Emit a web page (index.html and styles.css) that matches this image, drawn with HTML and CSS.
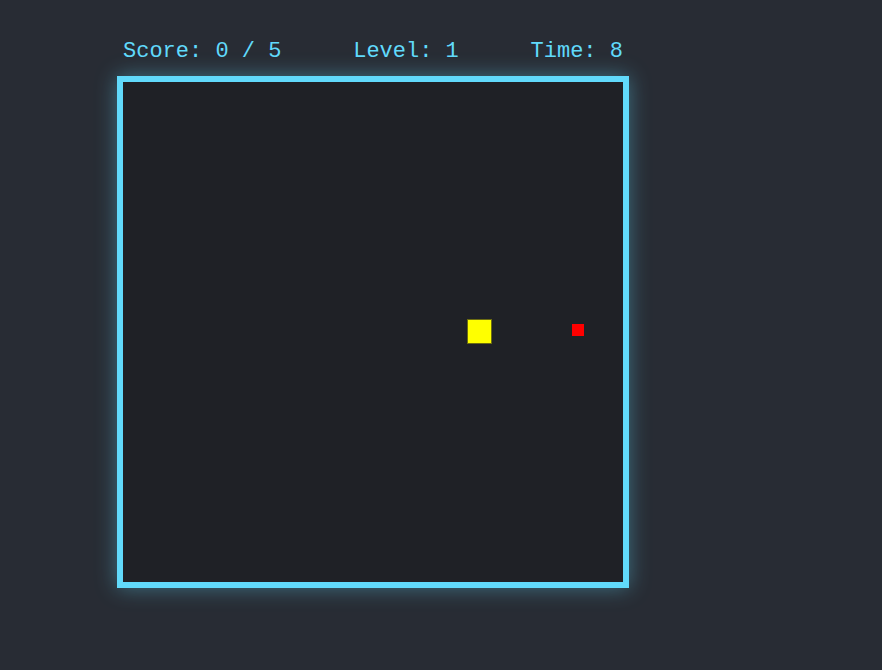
FILE: index.html
```html
<!DOCTYPE html>
<html>
<head>
<meta charset="utf-8">
<link rel="stylesheet" href="styles.css">
</head>
<body>
<div class="app">
  <div class="hud">
    <span class="stat">Score: 0 / 5</span>
    <span class="stat">Level: 1</span>
    <span class="stat">Time: 8</span>
  </div>
  <div class="board">
    <div class="player"></div>
    <div class="food"></div>
  </div>
</div>
</body>
</html>
```
FILE: styles.css
```css
html, body {
  margin: 0;
  padding: 0;
  background: #282c34;
  height: 100%;
}
.app {
  width: 512px;
  margin-left: 117px;
  padding-top: 39px;
  font-family: "Nimbus Mono PS", "Nimbus Mono L", Courier, "FreeMono", "Courier New", monospace;
}
.hud {
  display: flex;
  justify-content: space-between;
  padding: 0 6px;
  height: 25px;
  line-height: 25px;
  font-size: 22px;
  color: #61dafb;
  margin-bottom: 12px;
}
.board {
  position: relative;
  width: 500px;
  height: 500px;
  border: 6px solid #61dafb;
  background: #1f2126;
  box-shadow: 0 0 20px rgba(97, 218, 251, 0.4);
}
.player {
  position: absolute;
  left: 344px;
  top: 237px;
  width: 23px;
  height: 23px;
  background: #ffff00;
  border: 1px solid #6b6b10;
}
.food {
  position: absolute;
  left: 449px;
  top: 242px;
  width: 12px;
  height: 12px;
  background: #ff0000;
}
```
